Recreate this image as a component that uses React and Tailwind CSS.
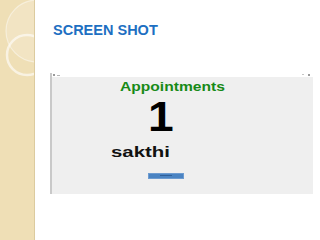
// Slide with a "SCREEN SHOT" title and a captured app window
export default function App() {
  return (
    <div className="w-[320px] h-[240px] flex bg-white overflow-hidden" style={{ fontFamily: '"Liberation Sans", Arial, sans-serif' }}>
      {/* beige side strip */}
      <div className="relative w-[35px] h-full bg-[#efdfb6] border-r border-[#dccb9f] overflow-hidden">
        <svg width="35" height="240" className="absolute left-0 top-0">
          <circle cx="37" cy="31" r="31" fill="rgba(255,255,255,0.18)" stroke="rgba(255,255,255,0.45)" strokeWidth="1.2" />
          <circle cx="27" cy="55" r="20" fill="none" stroke="rgba(255,255,255,0.6)" strokeWidth="2.5" />
        </svg>
      </div>

      <div className="flex-1 flex flex-col">
        <div className="pt-[23px] ml-[18px] text-[14.5px] leading-[14.5px] font-bold text-[#1d6fc2]">
          SCREEN SHOT
        </div>

        {/* captured window */}
        <div className="mt-[35px] ml-[15px] w-[263px] flex flex-col border-l-2 border-[#c9c9c9]">
          <div className="h-[4px] bg-white flex items-start justify-between px-[1px]">
            <div className="flex gap-[2px] mt-[1px]">
              <div className="w-[2px] h-[2px] bg-[#9a9a9a]" />
              <div className="w-[3px] h-[1px] bg-[#b5b5b5] mt-[1px]" />
            </div>
            <div className="flex gap-[4px] mt-[1px] mr-[2px]">
              <div className="w-[2px] h-[1px] bg-[#c5c5c5]" />
              <div className="w-[2px] h-[2px] bg-[#9a9a9a]" />
            </div>
          </div>
          <div className="h-[117px] bg-[#efefef] flex flex-col items-start">
            <div className="mt-[3px] ml-[68px] origin-left scale-x-[1.2] text-[13px] leading-[13px] font-bold text-[#178a17]">
              Appointments
            </div>
            <div className="mt-[3px] ml-[96px] origin-left scale-x-[1.1] text-[42px] leading-[42px] font-bold text-black">
              1
            </div>
            <div className="mt-[6px] ml-[59px] origin-left scale-x-[1.36] text-[15px] leading-[15px] font-bold text-[#111]">
              sakthi
            </div>
            <div className="mt-[14px] ml-[96px] w-[36px] h-[6px] bg-[#4a83c2] border border-[#6d9bd0] flex items-center justify-center">
              <div className="w-[12px] h-[1px] bg-[#2f5f99]" />
            </div>
          </div>
        </div>
      </div>
    </div>
  );
}
